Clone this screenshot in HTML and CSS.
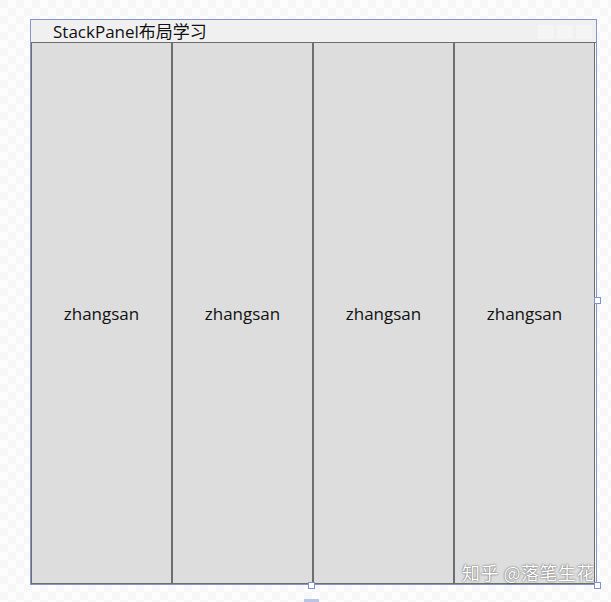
FILE: index.html
```html
<!DOCTYPE html>
<html lang="zh">
<head>
<meta charset="utf-8">
<title>StackPanel布局学习</title>
<link rel="stylesheet" href="styles.css">
</head>
<body>
<div class="stage">
  <div class="window">
    <div class="titlebar">
      <span class="title">StackPanel布局学习</span>
      <span class="caption-buttons"><i></i><i></i><i></i></span>
    </div>
    <div class="stack">
      <div class="item">zhangsan</div>
      <div class="item">zhangsan</div>
      <div class="item">zhangsan</div>
      <div class="item">zhangsan</div>
    </div>
    <span class="grip grip-right"></span>
    <span class="grip grip-bottom"></span>
    <span class="grip grip-corner"></span>
    <span class="watermark">知乎 @落笔生花</span>
  </div>
  <span class="scroll-tab"></span>
</div>
</body>
</html>
```
FILE: styles.css
```css
html, body {
  margin: 0;
  padding: 0;
}

body {
  width: 611px;
  height: 602px;
  overflow: hidden;
  background-color: #f7f7f7;
  background-image:
    linear-gradient(45deg, #fdfdfd 25%, transparent 25%, transparent 75%, #fdfdfd 75%),
    linear-gradient(45deg, #fdfdfd 25%, transparent 25%, transparent 75%, #fdfdfd 75%);
  background-size: 16px 16px;
  background-position: 0 0, 8px 8px;
  font-family: "Open Sans", "Noto Sans", "Noto Sans CJK SC", sans-serif;
}

.stage {
  position: relative;
  padding: 19px 0 0 30px;
  height: 583px;
}

.window {
  position: relative;
  width: 565px;
  height: 564px;
  border: 1px solid #8297cf;
  display: flex;
  flex-direction: column;
}

.titlebar {
  height: 22px;
  background: #f0f0f0;
  display: flex;
  align-items: center;
  justify-content: space-between;
  padding-left: 22px;
  padding-right: 4px;
}

.title {
  font-size: 17px;
  color: #111;
  line-height: 22px;
  font-family: "Open Sans", "Noto Sans CJK SC", sans-serif;
  margin-top: 1px;
}

.caption-buttons {
  display: flex;
  gap: 3px;
  margin-top: 1px;
}

.caption-buttons i {
  width: 16px;
  height: 14px;
  background: #f5f5f5;
}

.stack {
  flex: 1;
  display: flex;
  border-top: 1px solid #6d6d6d;
}

/* each button keeps its own 1px frame, so neighbours meet in a 2px line */
.item {
  flex: 0 0 141px;
  box-sizing: border-box;
  background: #dddddd;
  border: 1px solid #6e6e6e;
  border-top: 0;
  display: flex;
  align-items: center;
  justify-content: center;
  font-size: 17px;
  color: #111;
  padding-top: 1px;
}

.grip {
  position: absolute;
  width: 5px;
  height: 5px;
  border: 1px solid #7f92cc;
  background: #fff;
}

.grip-right {
  right: -5px;
  top: 277px;
}

.grip-bottom {
  left: 277px;
  bottom: -5px;
}

.grip-corner {
  right: -5px;
  bottom: -5px;
}

.watermark {
  position: absolute;
  right: 1px;
  bottom: 1px;
  font-size: 18px;
  color: #fff;
  font-family: "Noto Sans CJK SC", sans-serif;
  text-shadow: 0 0 2px rgba(0, 0, 0, 0.55), 0 0 1px rgba(0, 0, 0, 0.4);
  letter-spacing: 0.5px;
  line-height: 22px;
}

.scroll-tab {
  position: absolute;
  left: 304px;
  top: 599px;
  width: 15px;
  height: 3px;
  background: #b8c4e8;
}
```
